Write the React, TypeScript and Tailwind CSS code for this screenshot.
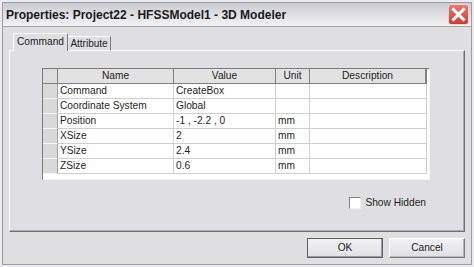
import React from 'react';

interface PropRow {
  name: string;
  value: string;
  unit: string;
  description: string;
}

const rows: PropRow[] = [
  { name: 'Command', value: 'CreateBox', unit: '', description: '' },
  { name: 'Coordinate System', value: 'Global', unit: '', description: '' },
  { name: 'Position', value: '-1 , -2.2 , 0', unit: 'mm', description: '' },
  { name: 'XSize', value: '2', unit: 'mm', description: '' },
  { name: 'YSize', value: '2.4', unit: 'mm', description: '' },
  { name: 'ZSize', value: '0.6', unit: 'mm', description: '' },
];

function CloseButton() {
  return (
    <div className="w-[21px] h-[21px] rounded-[3px] border border-[#f3d2d2] bg-gradient-to-b from-[#e87a72] to-[#c63c36] flex items-center justify-center">
      <svg width="15" height="15" viewBox="0 0 15 15">
        <path d="M2.5 2.5 L12.5 12.5 M12.5 2.5 L2.5 12.5" stroke="#ffffff" strokeWidth="3" strokeLinecap="square" />
      </svg>
    </div>
  );
}

export default function App() {
  return (
    <div className="w-[474px] h-[267px] bg-[#ececf0] px-[2px] pt-[2px] pb-[2px] flex flex-col overflow-hidden font-['Liberation_Sans',Arial,sans-serif] text-[#1e1e1e]">
      <div className="flex-1 flex flex-col bg-[#dfdee3] border border-[#9c9ca4]">
        {/* title bar */}
        <div className="h-[24px] shrink-0 flex items-center justify-between pl-[3px] pr-[2px] bg-gradient-to-b from-[#cacad2] to-[#f4f4f6] border-b border-[#a2a2aa]">
          <span className="text-[12px] font-bold leading-none text-[#1a1a1a]">
            Properties: Project22 - HFSSModel1 - 3D Modeler
          </span>
          <CloseButton />
        </div>

        <div className="flex flex-col pl-[6px] pr-[6px]">
          {/* tabs */}
          <div className="flex items-end pl-[4px] mt-[6px] -mb-px relative z-10 h-[18px]">
            <div className="w-[55px] h-[18px] bg-[#dfdee3] border-t border-l border-white border-r border-r-[#7c7c82] flex items-center justify-center text-[10.2px] pb-[2px]">
              Command
            </div>
            <div className="w-[43px] h-[15px] border-t border-white border-r border-r-[#7c7c82] flex items-center justify-center text-[10px] border-b border-b-white">
              Attribute
            </div>
          </div>

          {/* tab panel */}
          <div className="w-[456px] h-[182px] border-t border-l border-white border-r border-b border-r-[#6f6f76] border-b-[#6f6f76] shadow-[inset_-1px_-1px_0_#a9a9af] pl-[32px] pt-[17px] flex flex-col">
            <div className="w-[388px] h-[112px] bg-white border-t border-l border-[#7a7a7e] border-b border-r border-b-[#f4f4f4] border-r-[#f4f4f4] flex flex-col text-[10.2px]">
              <div className="flex h-[15px] shrink-0">
                <div className="w-[15px] bg-[#dcdcdc] border-r border-b border-[#808080]" />
                <div className="w-[116px] bg-[#e2e2e2] border-r border-b border-[#808080] flex items-center justify-center">Name</div>
                <div className="w-[102px] bg-[#e2e2e2] border-r border-b border-[#808080] flex items-center justify-center">Value</div>
                <div className="w-[34px] bg-[#e2e2e2] border-r border-b border-[#808080] flex items-center justify-center">Unit</div>
                <div className="w-[117px] bg-[#e2e2e2] border-r-2 border-b border-[#808080] flex items-center justify-center">Description</div>
              </div>
              {rows.map((row) => (
                <div key={row.name} className="flex h-[15px] shrink-0">
                  <div className="w-[15px] bg-[#d9d9d9] border-r border-r-[#a0a0a0] border-b border-b-[#f4f4f4]" />
                  <div className="w-[116px] border-r border-b border-[#cfcfcf] flex items-center pl-[2px] whitespace-nowrap">{row.name}</div>
                  <div className="w-[102px] border-r border-b border-[#cfcfcf] flex items-center pl-[2px] whitespace-nowrap">{row.value}</div>
                  <div className="w-[34px] border-r border-b border-[#cfcfcf] flex items-center pl-[2px]">{row.unit}</div>
                  <div className="w-[117px] border-r border-b border-[#cfcfcf] flex items-center pl-[2px]">{row.description}</div>
                </div>
              ))}
            </div>

            <div className="w-[388px] flex justify-end items-center gap-[4px] pr-[4px] mt-[17px]">
              <div className="w-[12px] h-[12px] bg-white border-t border-l border-[#808080] border-b border-r border-b-[#f0f0f0] border-r-[#f0f0f0]" />
              <span className="text-[10.2px] leading-none">Show Hidden</span>
            </div>
          </div>

          {/* buttons */}
          <div className="flex justify-end gap-[6px] mt-[6px]">
            <button className="w-[76px] h-[20px] bg-gradient-to-b from-[#f2f2f4] to-[#e0e0e4] border border-[#5e5e64] shadow-[inset_-1px_-1px_0_#9a9aa0] text-[10.2px] text-[#1e1e1e]">
              OK
            </button>
            <button className="w-[76px] h-[20px] bg-gradient-to-b from-[#f2f2f4] to-[#e0e0e4] border border-t-white border-l-white border-r-[#7a7a80] border-b-[#7a7a80] shadow-[inset_-1px_-1px_0_#b4b4ba] text-[10.2px] text-[#1e1e1e]">
              Cancel
            </button>
          </div>
        </div>
      </div>
    </div>
  );
}
